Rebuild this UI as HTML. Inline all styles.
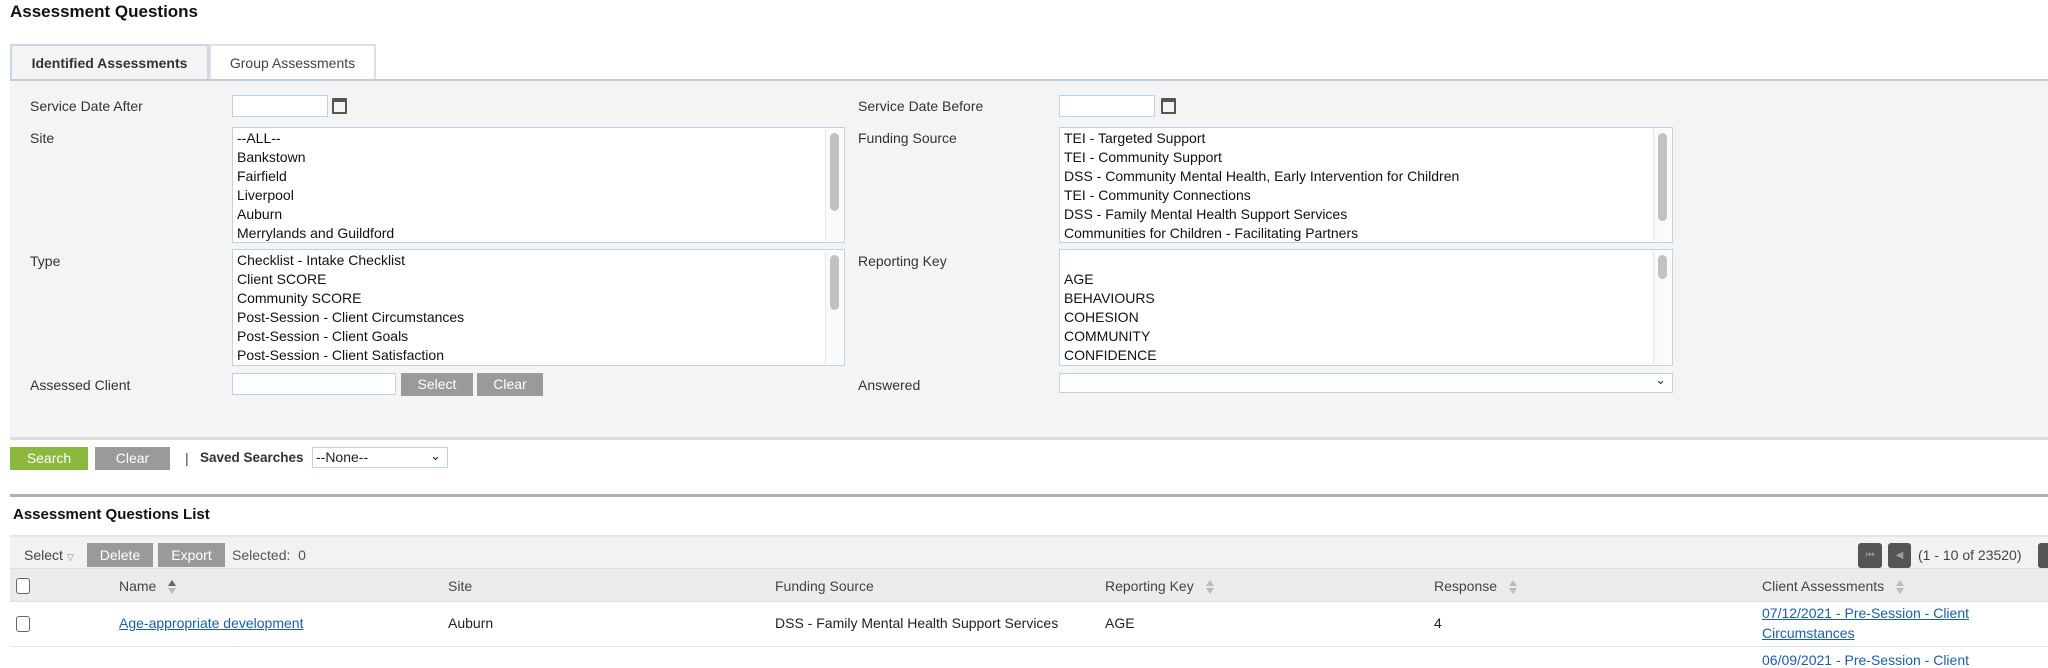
<!DOCTYPE html>
<html><head><meta charset="utf-8"><style>
*{box-sizing:border-box;margin:0;padding:0}
body{width:2048px;height:656px;overflow:hidden;background:#fff;font-family:"Liberation Sans",Arial,sans-serif;font-size:14px;color:#222;position:relative}
.a{position:absolute;white-space:nowrap}
.lbl{color:#333}
.inp{position:absolute;background:#fff;border:1px solid #b8d4ea}
.lb{position:absolute;background:#fff;border:1px solid #b8d4ea;padding:1px 4px;line-height:19px;color:#111}
.sb{position:absolute;right:1px;top:1px;bottom:1px;width:18px;border-left:1px solid #e6e6e6;background:#fafafa}
.sb i{position:absolute;left:4px;width:9px;border-radius:5px;background:#c1c1c1}
.btn{position:absolute;background:#9a9a9a;color:#fff;text-align:center;font-size:14px}
.cal{position:absolute;width:15px;height:16px;border:2px solid #555;border-top-width:4px;border-radius:1px}
.th{position:absolute;color:#444}
.srt{display:inline-block;vertical-align:middle;margin-left:12px;width:9px;height:14px;position:relative}
.srt:before{content:"";position:absolute;left:0;top:0;border-left:4.5px solid transparent;border-right:4.5px solid transparent;border-bottom:6px solid #bbb}
.srt:after{content:"";position:absolute;left:0;bottom:0;border-left:4.5px solid transparent;border-right:4.5px solid transparent;border-top:6px solid #bbb}
.cb{position:absolute;width:14px;height:16px;border:1.5px solid #666;border-radius:3px;background:#fff}
a{color:#1a5fa8}
</style></head><body>
<div class="a" style="left:10px;top:2px;font-weight:bold;font-size:17px;color:#111">Assessment Questions</div>

<div class="a" style="left:10px;top:44px;width:199px;height:37px;background:#f4f4f4;border:2px solid #c8d8e8;border-bottom:none;font-weight:bold;text-align:center;line-height:35px;color:#333">Identified Assessments</div>
<div class="a" style="left:209px;top:44px;width:167px;height:36px;background:#fff;border:2px solid #e0e0e0;border-bottom:none;text-align:center;line-height:34px;color:#444">Group Assessments</div>
<div class="a" style="left:10px;top:79px;width:2038px;height:2px;background:#b8cde0"></div>
<div class="a" style="left:10px;top:81px;width:2038px;height:359px;background:#f4f4f4;border-bottom:3px solid #ddd"></div>

<div class="a lbl" style="left:30px;top:98px">Service Date After</div>
<div class="inp" style="left:232px;top:95px;width:96px;height:22px"></div>
<div class="cal" style="left:332px;top:98px"></div>
<div class="a lbl" style="left:30px;top:130px">Site</div>
<div class="lb" style="left:232px;top:127px;width:613px;height:116px">--ALL--<br>Bankstown<br>Fairfield<br>Liverpool<br>Auburn<br>Merrylands and Guildford<div class="sb"><i style="top:4px;height:78px"></i></div></div>
<div class="a lbl" style="left:30px;top:253px">Type</div>
<div class="lb" style="left:232px;top:249px;width:613px;height:117px">Checklist - Intake Checklist<br>Client SCORE<br>Community SCORE<br>Post-Session - Client Circumstances<br>Post-Session - Client Goals<br>Post-Session - Client Satisfaction<div class="sb"><i style="top:4px;height:55px"></i></div></div>
<div class="a lbl" style="left:30px;top:377px">Assessed Client</div>
<div class="inp" style="left:232px;top:373px;width:164px;height:22px"></div>
<div class="btn" style="left:401px;top:373px;width:72px;height:23px;line-height:23px">Select</div>
<div class="btn" style="left:477px;top:373px;width:66px;height:23px;line-height:23px">Clear</div>

<div class="a lbl" style="left:858px;top:98px">Service Date Before</div>
<div class="inp" style="left:1059px;top:95px;width:96px;height:22px"></div>
<div class="cal" style="left:1161px;top:98px"></div>
<div class="a lbl" style="left:858px;top:130px">Funding Source</div>
<div class="lb" style="left:1059px;top:127px;width:614px;height:116px">TEI - Targeted Support<br>TEI - Community Support<br>DSS - Community Mental Health, Early Intervention for Children<br>TEI - Community Connections<br>DSS - Family Mental Health Support Services<br>Communities for Children - Facilitating Partners<div class="sb"><i style="top:4px;height:88px"></i></div></div>
<div class="a lbl" style="left:858px;top:253px">Reporting Key</div>
<div class="lb" style="left:1059px;top:249px;width:614px;height:117px"><br>AGE<br>BEHAVIOURS<br>COHESION<br>COMMUNITY<br>CONFIDENCE<div class="sb"><i style="top:4px;height:24px"></i></div></div>
<div class="a lbl" style="left:858px;top:377px">Answered</div>
<div class="inp" style="left:1059px;top:373px;width:614px;height:20px"><span style="position:absolute;right:6px;top:-2px;font-size:13px;color:#333">&#8964;</span></div>

<div class="btn" style="left:10px;top:447px;width:78px;height:23px;line-height:23px;background:#8cb83f">Search</div>
<div class="btn" style="left:95px;top:447px;width:75px;height:23px;line-height:23px">Clear</div>
<div class="a" style="left:185px;top:450px;color:#444">|</div>
<div class="a" style="left:200px;top:450px;font-weight:bold;font-size:13.5px;color:#333">Saved Searches</div>
<div class="inp" style="left:312px;top:447px;width:136px;height:21px;padding-left:3px;line-height:19px;font-size:14px">--None--<span style="position:absolute;right:6px;top:-2px;font-size:13px">&#8964;</span></div>

<div class="a" style="left:10px;top:494px;width:2038px;height:3px;background:#b0b0b0"></div>
<div class="a" style="left:13px;top:506px;font-weight:bold;font-size:15px;color:#111">Assessment Questions List</div>

<div class="a" style="left:10px;top:535px;width:2038px;height:34px;background:#f2f2f2;border-top:2px solid #dde8f0;border-bottom:1px solid #ddd"></div>
<div class="a" style="left:24px;top:547px;color:#444">Select <span style="font-size:9px;color:#888">&#9661;</span></div>
<div class="btn" style="left:87px;top:543px;width:66px;height:24px;line-height:24px">Delete</div>
<div class="btn" style="left:158px;top:543px;width:67px;height:24px;line-height:24px">Export</div>
<div class="a" style="left:232px;top:547px;color:#555">Selected:&nbsp; 0</div>
<div class="btn" style="left:1858px;top:543px;width:24px;height:25px;background:#555;border-radius:3px;font-size:10px;line-height:25px;color:#999">&#9198;</div>
<div class="btn" style="left:1888px;top:543px;width:23px;height:25px;background:#555;border-radius:3px;font-size:10px;line-height:25px;color:#999">&#9664;</div>
<div class="a" style="left:1918px;top:547px;color:#444">(1 - 10 of 23520)</div>
<div class="btn" style="left:2038px;top:543px;width:20px;height:25px;background:#555;border-radius:3px"></div>

<div class="a" style="left:10px;top:569px;width:2038px;height:33px;background:#ebebeb;border-bottom:1px solid #ddd"></div>
<div class="cb" style="left:16px;top:578px"></div>
<div class="th" style="left:119px;top:578px">Name<span class="srt"><span style="position:absolute;left:0;top:0;border-left:4.5px solid transparent;border-right:4.5px solid transparent;border-bottom:6px solid #666;z-index:1"></span></span></div>
<div class="th" style="left:448px;top:578px">Site</div>
<div class="th" style="left:775px;top:578px">Funding Source</div>
<div class="th" style="left:1105px;top:578px">Reporting Key<span class="srt"></span></div>
<div class="th" style="left:1434px;top:578px">Response<span class="srt"></span></div>
<div class="th" style="left:1762px;top:578px">Client Assessments<span class="srt"></span></div>

<div class="cb" style="left:16px;top:616px"></div>
<div class="a" style="left:119px;top:615px"><a href="#">Age-appropriate development</a></div>
<div class="a" style="left:448px;top:615px">Auburn</div>
<div class="a" style="left:775px;top:615px">DSS - Family Mental Health Support Services</div>
<div class="a" style="left:1105px;top:615px">AGE</div>
<div class="a" style="left:1434px;top:615px">4</div>
<div class="a" style="left:1762px;top:603px;line-height:20px"><a href="#">07/12/2021 - Pre-Session - Client<br>Circumstances</a></div>
<div class="a" style="left:10px;top:646px;width:2038px;height:1px;background:#e4e4e4"></div>
<div class="a" style="left:1762px;top:652px;color:#1a5fa8">06/09/2021 - Pre-Session - Client</div>
</body></html>
